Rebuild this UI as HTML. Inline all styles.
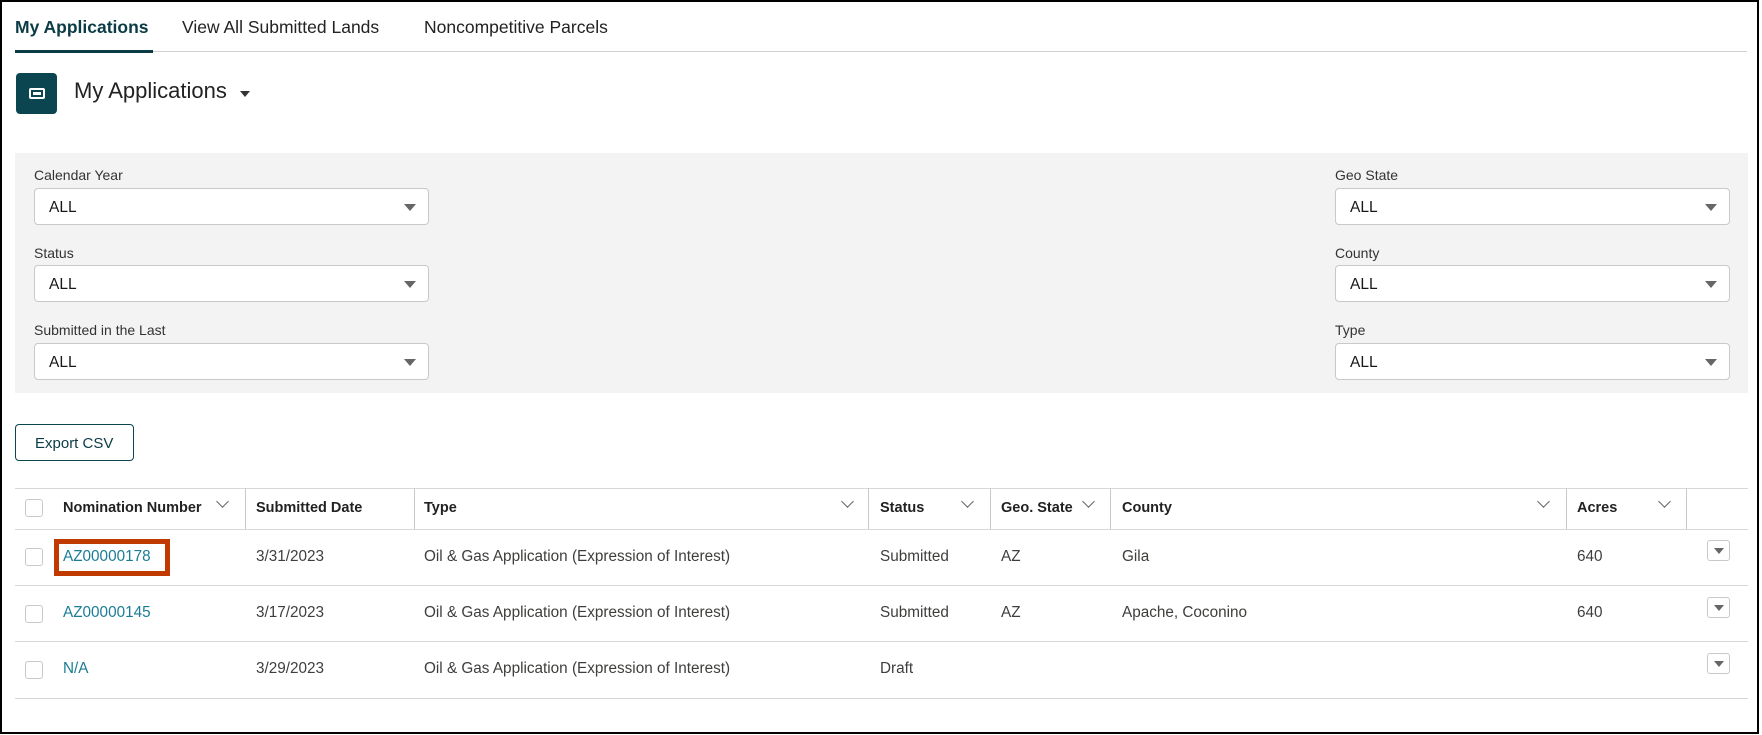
<!DOCTYPE html>
<html><head><meta charset="utf-8"><style>
*{box-sizing:border-box;margin:0;padding:0}
body{width:1762px;height:735px;background:#fff;font-family:"Liberation Sans",sans-serif;color:#181818;position:relative;overflow:hidden}
.frame{position:absolute;left:0;top:0;width:1759px;height:734px;border:2px solid #000}
.a{position:absolute;white-space:nowrap}
.tab{font-size:17.5px;color:#222;top:17px}
.lbl{font-size:14px;color:#333}
.sel{position:absolute;width:395px;height:37px;background:#fff;border:1px solid #c9c9c9;border-radius:4px;font-size:15.5px;padding:10px 0 0 14px;color:#181818}
.sel:after{content:"";position:absolute;right:12px;top:15px;border-left:6px solid transparent;border-right:6px solid transparent;border-top:7px solid #666}
.hd{font-size:14.5px;font-weight:bold;color:#222;top:500px}
.vl{position:absolute;top:488px;height:41px;width:1px;background:#c9c9c9}
.hl{position:absolute;left:15px;width:1733px;height:1px;background:#d8d8d8}
.chev{position:absolute;top:497px;width:9px;height:9px;border-right:1.5px solid #666;border-bottom:1.5px solid #666;transform:rotate(45deg)}
.cb{position:absolute;left:25px;width:18px;height:18px;border:1px solid #c9c9c9;border-radius:3px;background:#fff}
.c{font-size:15.3px;color:#3e3e3c}
.lnk{color:#1b7c95}
.rb{position:absolute;left:1707px;width:23px;height:21px;border:1px solid #c9c9c9;border-radius:3px;background:#fff}
.rb:after{content:"";position:absolute;left:6px;top:7px;border-left:5px solid transparent;border-right:5px solid transparent;border-top:6px solid #666}
</style></head><body>
<div class="frame"></div>
<div class="a tab" style="left:15px;font-weight:bold;color:#0b3b45">My Applications</div>
<div class="a tab" style="left:182px">View All Submitted Lands</div>
<div class="a tab" style="left:424px">Noncompetitive Parcels</div>
<div class="a" style="left:15px;top:51px;width:1732px;height:1px;background:#d0d0d0"></div>
<div class="a" style="left:15px;top:50px;width:138px;height:3px;background:#0b3b45"></div>
<div class="a" style="left:16px;top:73px;width:41px;height:41px;background:#0b4650;border-radius:4px"></div>
<div class="a" style="left:29px;top:88px;width:16px;height:11px;border:2px solid #fff;border-radius:2px"></div>
<div class="a" style="left:33px;top:92px;width:8px;height:3px;background:#fff"></div>
<div class="a" style="left:74px;top:78px;font-size:22px;color:#222">My Applications</div>
<div class="a" style="left:240px;top:91px;border-left:5px solid transparent;border-right:5px solid transparent;border-top:6px solid #333"></div>
<div class="a" style="left:15px;top:153px;width:1733px;height:240px;background:#f3f3f3"></div>
<div class="a lbl" style="left:34px;top:167px">Calendar Year</div>
<div class="sel" style="left:34px;top:188px">ALL</div>
<div class="a lbl" style="left:34px;top:245px">Status</div>
<div class="sel" style="left:34px;top:265px">ALL</div>
<div class="a lbl" style="left:34px;top:322px">Submitted in the Last</div>
<div class="sel" style="left:34px;top:343px">ALL</div>
<div class="a lbl" style="left:1335px;top:167px">Geo State</div>
<div class="sel" style="left:1335px;top:188px">ALL</div>
<div class="a lbl" style="left:1335px;top:245px">County</div>
<div class="sel" style="left:1335px;top:265px">ALL</div>
<div class="a lbl" style="left:1335px;top:322px">Type</div>
<div class="sel" style="left:1335px;top:343px">ALL</div>
<div class="a" style="left:15px;top:424px;width:119px;height:37px;border:1px solid #0b4650;border-radius:4px;font-size:15px;padding:10px 0 0 19px;color:#0b3b45">Export CSV</div>
<div class="hl" style="top:488px"></div>
<div class="hl" style="top:529px"></div>
<div class="hl" style="top:585px"></div>
<div class="hl" style="top:641px"></div>
<div class="hl" style="top:698px"></div>
<div class="vl" style="left:245px"></div><div class="vl" style="left:414px"></div><div class="vl" style="left:868px"></div><div class="vl" style="left:990px"></div><div class="vl" style="left:1110px"></div><div class="vl" style="left:1566px"></div><div class="vl" style="left:1686px"></div>
<div class="cb" style="top:499px"></div>
<div class="a hd" style="left:63px">Nomination Number</div>
<div class="a hd" style="left:256px">Submitted Date</div>
<div class="a hd" style="left:424px">Type</div>
<div class="a hd" style="left:880px">Status</div>
<div class="a hd" style="left:1001px">Geo. State</div>
<div class="a hd" style="left:1122px">County</div>
<div class="a hd" style="left:1577px">Acres</div>
<div class="chev" style="left:218px"></div><div class="chev" style="left:843px"></div><div class="chev" style="left:963px"></div><div class="chev" style="left:1084px"></div><div class="chev" style="left:1539px"></div><div class="chev" style="left:1660px"></div>

<div class="cb" style="top:548px"></div>
<div class="a" style="left:54px;top:539px;width:116px;height:37px;border:5px solid #c03a00"></div>
<div class="a c lnk" style="left:63px;top:548px">AZ00000178</div>
<div class="a c" style="left:256px;top:548px">3/31/2023</div>
<div class="a c" style="left:424px;top:548px">Oil &amp; Gas Application (Expression of Interest)</div>
<div class="a c" style="left:880px;top:548px">Submitted</div>
<div class="a c" style="left:1001px;top:548px">AZ</div>
<div class="a c" style="left:1122px;top:548px">Gila</div>
<div class="a c" style="left:1577px;top:548px">640</div>
<div class="rb" style="top:540px"></div>

<div class="cb" style="top:605px"></div>
<div class="a c lnk" style="left:63px;top:604px">AZ00000145</div>
<div class="a c" style="left:256px;top:604px">3/17/2023</div>
<div class="a c" style="left:424px;top:604px">Oil &amp; Gas Application (Expression of Interest)</div>
<div class="a c" style="left:880px;top:604px">Submitted</div>
<div class="a c" style="left:1001px;top:604px">AZ</div>
<div class="a c" style="left:1122px;top:604px">Apache, Coconino</div>
<div class="a c" style="left:1577px;top:604px">640</div>
<div class="rb" style="top:597px"></div>

<div class="cb" style="top:661px"></div>
<div class="a c lnk" style="left:63px;top:660px">N/A</div>
<div class="a c" style="left:256px;top:660px">3/29/2023</div>
<div class="a c" style="left:424px;top:660px">Oil &amp; Gas Application (Expression of Interest)</div>
<div class="a c" style="left:880px;top:660px">Draft</div>
<div class="rb" style="top:653px"></div>
</body></html>
